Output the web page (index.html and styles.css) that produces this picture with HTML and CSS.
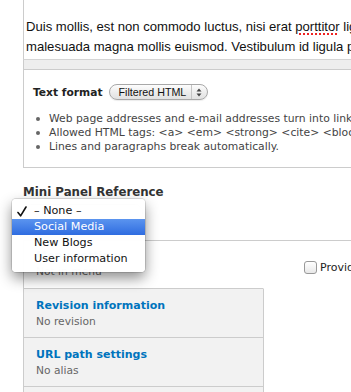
FILE: index.html
```html
<!DOCTYPE html>
<html>
<head>
<meta charset="utf-8">
<link rel="stylesheet" href="styles.css">
</head>
<body>
<div class="page">
  <div class="editor">
    <p>Duis mollis, est non commodo luctus, nisi erat <span class="spell">porttitor</span> ligula, eget lacinia odio sem nec elit.</p>
    <p>malesuada magna mollis euismod. Vestibulum id ligula porta felis euismod semper.</p>
  </div>
  <div class="editor-bar"></div>
  <div class="filter">
    <div class="format-row">
      <span class="format-label">Text format</span>
      <span class="mac-select"><span class="mac-select-text">Filtered HTML</span><span class="mac-select-arrows"><svg width="6" height="9" viewBox="0 0 6 9"><path d="M3 0.5 L5.5 3.5 H0.5 Z M3 8.5 L5.5 5.5 H0.5 Z" fill="#444"/></svg></span></span>
    </div>
    <ul class="tips">
      <li>Web page addresses and e-mail addresses turn into links automatically.</li>
      <li>Allowed HTML tags: &lt;a&gt; &lt;em&gt; &lt;strong&gt; &lt;cite&gt; &lt;blockquote&gt; &lt;code&gt;</li>
      <li>Lines and paragraphs break automatically.</li>
    </ul>
  </div>
  <div class="mini">
    <div class="mini-label">Mini Panel Reference</div>
    <div class="mini-select">– None –</div>
    <div class="popup">
      <div class="popup-item"><svg class="check" width="10" height="11" viewBox="0 0 10 11"><path d="M1 6.5 L3.6 9.8 L9 1" fill="none" stroke="#111" stroke-width="1.6" stroke-linecap="round" stroke-linejoin="round"/></svg>– None –</div>
      <div class="popup-item active">Social Media</div>
      <div class="popup-item">New Blogs</div>
      <div class="popup-item">User information</div>
    </div>
  </div>
  <div class="vtabs">
    <div class="vtabs-list">
      <div class="vtab selected">
        <div class="vtab-title">Menu settings</div>
        <div class="vtab-summary">Not in menu</div>
      </div>
      <div class="vtab">
        <div class="vtab-title">Revision information</div>
        <div class="vtab-summary">No revision</div>
      </div>
      <div class="vtab">
        <div class="vtab-title">URL path settings</div>
        <div class="vtab-summary">No alias</div>
      </div>
      <div class="vtab">
        <div class="vtab-title">Comment settings</div>
        <div class="vtab-summary">Open</div>
      </div>
    </div>
    <div class="vtabs-pane">
      <label class="check-row"><span class="checkbox"></span>Provide a menu link</label>
    </div>
  </div>
</div>
</body>
</html>
```

FILE: styles.css
```css
html, body {
  margin: 0;
  padding: 0;
  overflow: hidden;
  background: #fff;
}
.page {
  width: 640px;
  padding-left: 23px;
  font-family: "DejaVu Sans", Verdana, sans-serif;
  color: #333;
}
.editor {
  border-left: 1px solid #ccc;
  padding: 17px 0 2px 2px;
  font-family: "Liberation Sans", Arial, sans-serif;
  font-size: 13.1px;
  line-height: 20px;
  color: #111;
  white-space: nowrap;
  height: 40px;
}
.editor p {
  margin: 0;
}
.spell {
  text-decoration: underline dotted #e22;
  text-decoration-thickness: 2px;
  text-underline-offset: 2px;
}
.editor-bar {
  height: 9px;
  background: #eee;
  border-top: 1px solid #d4d4d4;
  border-left: 1px solid #ccc;
}
.filter {
  border: 1px solid #ccc;
  padding: 14px 0 13px 9px;
}
.format-row {
  display: flex;
  align-items: center;
  height: 16px;
}
.format-label {
  font-weight: bold;
  font-size: 10.7px;
  color: #222;
  margin-right: 6px;
}
.mac-select {
  display: inline-flex;
  align-items: center;
  height: 14px;
  width: 97px;
  border: 1px solid #a8a8a8;
  border-radius: 8px;
  background: linear-gradient(#fdfdfd, #ececec 55%, #e2e2e2);
  box-shadow: 0 1px 1px rgba(0,0,0,0.08);
  font-family: "Liberation Sans", Arial, sans-serif;
  font-size: 10.7px;
  color: #111;
}
.mac-select-text {
  flex: 1;
  padding-left: 9px;
}
.mac-select-arrows {
  width: 15px;
  height: 14px;
  border-left: 1px solid #c4c4c4;
  display: flex;
  align-items: center;
  justify-content: center;
}
.tips {
  margin: 12px 0 0 0;
  padding: 0 0 0 16px;
  font-size: 10.8px;
  line-height: 14px;
  color: #444;
  white-space: nowrap;
}
.tips li {
  list-style: none;
  position: relative;
}
.tips li::before {
  content: "";
  position: absolute;
  left: -13px;
  top: 5px;
  width: 4px;
  height: 4px;
  border-radius: 50%;
  background: #666;
}
.mini {
  position: relative;
  padding-top: 16px;
  height: 56px;
}
.mini-label {
  font-weight: bold;
  font-size: 11.8px;
  line-height: 16px;
  color: #333;
}
.mini-select {
  margin-top: 4px;
  width: 110px;
  height: 16px;
  border: 1px solid #aaa;
  border-radius: 8px;
  font-size: 11px;
  padding-left: 8px;
}
.popup {
  position: absolute;
  left: -11px;
  top: 31px;
  width: 133px;
  padding: 4px 0 5px;
  background: rgba(255,255,255,0.98);
  border-radius: 4px;
  box-shadow: 0 0 0 1px rgba(0,0,0,0.12), 0 6px 14px rgba(0,0,0,0.45);
  font-size: 11.2px;
  color: #111;
  z-index: 5;
}
.popup-item {
  position: relative;
  height: 16px;
  line-height: 16px;
  padding-left: 22px;
  white-space: nowrap;
}
.popup-item.active {
  background: linear-gradient(#5b94ef, #2f6ce0);
  color: #fff;
}
.check {
  position: absolute;
  left: 5px;
  top: 3px;
}
.vtabs {
  display: flex;
  border-top: 1px solid #ccc;
  border-left: 1px solid #ccc;
}
.vtabs-list {
  width: 240px;
  flex: none;
}
.vtab {
  background: #f2f2f2;
  border-bottom: 1px solid #ccc;
  border-right: 1px solid #ccc;
  padding: 9px 12px 7px;
}
.vtab.selected {
  background: #fff;
  border-right-color: transparent;
  padding: 7px 12px 8px;
}
.vtab-title {
  font-weight: bold;
  font-size: 11px;
  line-height: 16px;
  color: #0074bd;
}
.vtab-summary {
  font-size: 10.7px;
  line-height: 16px;
  color: #666;
}
.vtabs-pane {
  padding: 20px 0 0 40px;
}
.check-row {
  display: flex;
  align-items: center;
  font-size: 11px;
  color: #222;
  white-space: nowrap;
}
.checkbox {
  width: 11px;
  height: 11px;
  border: 1px solid #999;
  border-radius: 3px;
  background: linear-gradient(#fff, #e8e8e8);
  margin-right: 3px;
}
```
